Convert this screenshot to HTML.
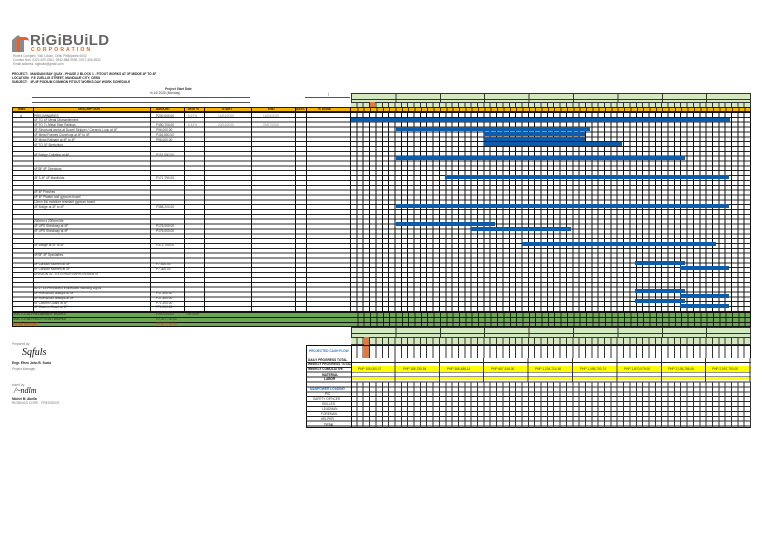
<!DOCTYPE html><html><head><style>
body{margin:0;width:768px;height:543px;background:#fff;position:relative;overflow:hidden;font-family:"Liberation Sans",sans-serif;}
.a{position:absolute;}
.t{position:absolute;font-size:3.2px;color:#333;white-space:nowrap;line-height:4px;}
.b{position:absolute;height:3.5px;background:#0b5cad;}
.vl{position:absolute;width:1px;background:#111;}
</style></head><body>
<div class="a" style="left:12px;top:35px;width:12px;height:17px;background:#8a8a8a;clip-path:polygon(0 30%,50% 0,100% 30%,100% 100%,0 100%)"></div>
<div class="a" style="left:17px;top:37px;width:12px;height:15px;border-left:3px solid #e8602c;border-top:3px solid #e8602c;border-radius:4px 4px 0 0;box-sizing:border-box"></div>
<div class="a" style="left:30px;top:32px;font-size:15px;color:#666;letter-spacing:0.3px;font-weight:bold">RiGiBUiLD</div>
<div class="a" style="left:31px;top:47px;font-size:5px;color:#e8602c;letter-spacing:2.2px;font-weight:bold">CORPORATION</div>
<div class="t" style="left:13px;top:54px;color:#777">Rivera Complex, Yati, Liloan, Cebu Philippines 6002</div>
<div class="t" style="left:13px;top:58px;color:#777">Contact Nos. 0322-929-0351, 0932-888-9936, 0917-306-9632</div>
<div class="t" style="left:13px;top:62px;color:#777">Email address: rigibuild@gmail.com</div>
<div class="t" style="left:12px;top:72px;font-weight:bold;color:#222">PROJECT:&nbsp;&nbsp;&nbsp;MANDANI BAY QUAY - PHASE 2 BLOCK 1 - FITOUT WORKS AT 3F MIDDE 4F TO 4F</div>
<div class="t" style="left:12px;top:76px;font-weight:bold;color:#222">LOCATION:&nbsp;&nbsp;F.E ZUELLIG STREET, MANDAUE CITY, CEBU</div>
<div class="t" style="left:12px;top:80px;font-weight:bold;color:#222">SUBJECT:&nbsp;&nbsp;&nbsp;4F-4F PODIUM COMMON FITOUT WORKS DAY WORK SCHEDULE</div>
<div class="t" style="left:165px;top:87px;font-weight:bold">Project Start Date</div>
<div class="t" style="left:150px;top:91px">in 14/ 2025 (Monday)</div>
<div class="a" style="left:32px;top:97px;width:218px;height:1px;background:#555"></div>
<div class="a" style="left:32px;top:102px;width:218px;height:1px;background:#555"></div>
<div class="a" style="left:305px;top:97px;width:45px;height:1px;background:#555"></div>
<div class="t" style="left:328px;top:92px">|</div>
<div class="a" style="left:351px;top:93px;width:400px;height:14px;background:#d4e8bf;border:1px solid #333;box-sizing:border-box;background-image:repeating-linear-gradient(90deg,transparent 0 43.4px,#333 43.4px 44.4px),linear-gradient(#333,#333);background-size:auto,100% 1px;background-position:0 0,0 4.5px;background-repeat:repeat,no-repeat"></div>
<div class="a" style="left:351px;top:102px;width:400px;height:5px;background:#d4e8bf;background-image:repeating-linear-gradient(90deg,transparent 0 5.35px,#333 5.35px 6.35px);border-top:1px solid #333;box-sizing:border-box"></div>
<div class="a" style="left:370px;top:102px;width:5px;height:5px;background:#e8763a"></div>
<div class="a" style="left:12px;top:107px;width:739px;height:5px;background:#f4b400;border:1px solid #222;box-sizing:border-box;background-image:repeating-linear-gradient(90deg,transparent 0 5.35px,#333 5.35px 6.35px);background-position:339px 0;background-size:400px 5px;background-repeat:no-repeat"></div>
<div class="t" style="left:18px;top:107px;font-weight:bold;color:#222">WBS</div>
<div class="t" style="left:78px;top:107px;font-weight:bold;color:#222">DESCRIPTION</div>
<div class="t" style="left:156px;top:107px;font-weight:bold;color:#222">AMOUNT</div>
<div class="t" style="left:188px;top:107px;font-weight:bold;color:#222">wt in %</div>
<div class="t" style="left:222px;top:107px;font-weight:bold;color:#222">START</div>
<div class="t" style="left:268px;top:107px;font-weight:bold;color:#222">END</div>
<div class="t" style="left:296px;top:107px;font-weight:bold;color:#222">DAYS</div>
<div class="t" style="left:318px;top:107px;font-weight:bold;color:#222">% DONE</div>
<div class="a" style="left:12px;top:112px;width:739px;height:200px;border:1px solid #111;box-sizing:border-box;background-image:repeating-linear-gradient(180deg,transparent 0 3.85px,#222 3.85px 4.85px)"></div>
<div class="a" style="left:351px;top:112px;width:400px;height:200px;background-image:repeating-linear-gradient(90deg,transparent 0 5.35px,#111 5.35px 6.35px)"></div>
<div class="vl" style="left:33px;top:107px;height:205px"></div>
<div class="vl" style="left:150px;top:107px;height:220px"></div>
<div class="vl" style="left:184px;top:107px;height:220px"></div>
<div class="vl" style="left:204px;top:107px;height:220px"></div>
<div class="vl" style="left:251px;top:107px;height:220px"></div>
<div class="vl" style="left:295px;top:107px;height:220px"></div>
<div class="vl" style="left:306px;top:107px;height:220px"></div>
<div class="vl" style="left:350px;top:107px;height:220px"></div>
<div class="t" style="left:20px;top:114px">A</div>
<div class="t" style="left:34px;top:114px;color:#222">PRELIMINARIES</div><div class="t" style="left:156px;top:114px">P200,000.00</div><div class="t" style="left:188px;top:114px;color:#888">8.57%</div><div class="t" style="left:218px;top:114px;color:#888">14/04/2025</div><div class="t" style="left:263px;top:114px;color:#888">14/06/2025</div>
<div class="t" style="left:34px;top:118px">4F TO 4F Metal Dismantlement</div>
<div class="t" style="left:34px;top:123px">4F TO 7L Metal Stair Railings</div><div class="t" style="left:156px;top:123px">P450,700.00</div><div class="t" style="left:188px;top:123px;color:#888">6.44%</div><div class="t" style="left:218px;top:123px;color:#888">20/04/2025</div><div class="t" style="left:263px;top:123px;color:#888">20/07/2025</div>
<div class="t" style="left:34px;top:128px">4F Structural works at Dowel Stripper / Ceramic Loop at 4F</div><div class="t" style="left:156px;top:128px">P96,000.00</div>
<div class="t" style="left:34px;top:133px">4F Metal Frames Coverings at 4F to 4F</div><div class="t" style="left:156px;top:133px">P116,800.00</div>
<div class="t" style="left:34px;top:138px">4F Metal Railgate at 4F to 4F</div><div class="t" style="left:156px;top:138px">P96,000.00</div>
<div class="t" style="left:34px;top:143px">4F TO 3F Stretching</div>
<div class="t" style="left:34px;top:153px">4F Bridge Collation at 4F</div><div class="t" style="left:156px;top:153px">P110,000.00</div>
<div class="t" style="left:34px;top:167px">4F/3F 4F Openings</div>
<div class="t" style="left:34px;top:176px">4F 3-4F 4F Manifolds</div><div class="t" style="left:156px;top:176px">P171,790.00</div>
<div class="t" style="left:34px;top:190px">4F 4F Finishes</div>
<div class="t" style="left:34px;top:195px">4F 4F Plaster and gypsum board</div>
<div class="t" style="left:34px;top:200px">12mm thk moisture resistant gypsum board</div>
<div class="t" style="left:34px;top:205px">4F Bridge at 4F to 4F</div><div class="t" style="left:156px;top:205px">P388,200.00</div>
<div class="t" style="left:34px;top:219px">200mm x 200mm tile</div>
<div class="t" style="left:34px;top:224px">4F UPS Shindway at 4F</div><div class="t" style="left:156px;top:224px">P176,000.00</div>
<div class="t" style="left:34px;top:229px">4F UPS Shindway at 4F</div><div class="t" style="left:156px;top:229px">P176,000.00</div>
<div class="t" style="left:34px;top:243px">4F Bridge at 4F to 4F</div><div class="t" style="left:156px;top:243px">P371,700.00</div>
<div class="t" style="left:34px;top:253px">4F/3F 4F Specialties</div>
<div class="t" style="left:34px;top:262px">4F Cartoon Moreen at 4F</div><div class="t" style="left:156px;top:262px">P7,300.00</div>
<div class="t" style="left:34px;top:267px">4F Cartoon Moreen at 4F</div><div class="t" style="left:156px;top:267px">P7,300.00</div>
<div class="t" style="left:34px;top:272px">DIVISION 32 - EXTERIOR IMPROVEMENTS</div>
<div class="t" style="left:34px;top:286px">32 17 23 Permanent Embedded Warning Lights</div>
<div class="t" style="left:34px;top:291px">4F Fibersmart Gallops at 4F</div><div class="t" style="left:156px;top:291px">P17,300.00</div>
<div class="t" style="left:34px;top:296px">4F Fibersmart Gallops at 4F</div><div class="t" style="left:156px;top:296px">P17,300.00</div>
<div class="t" style="left:34px;top:301px">4F Column Guard at 4F</div><div class="t" style="left:156px;top:301px">P71,300.00</div>
<div class="t" style="left:34px;top:305px">4F Column Guard at 4F</div><div class="t" style="left:156px;top:305px">P71,300.00</div>
<div class="b" style="left:351px;top:118px;width:379px"></div>
<div class="b" style="left:396px;top:127px;width:194px"></div>
<div class="b" style="left:484px;top:132px;width:101px"></div>
<div class="b" style="left:484px;top:137px;width:101px"></div>
<div class="b" style="left:484px;top:142px;width:138px"></div>
<div class="b" style="left:396px;top:156px;width:289px"></div>
<div class="b" style="left:445px;top:175px;width:284px"></div>
<div class="b" style="left:396px;top:204px;width:333px"></div>
<div class="b" style="left:396px;top:222px;width:99px"></div>
<div class="b" style="left:471px;top:227px;width:100px"></div>
<div class="b" style="left:522px;top:242px;width:194px"></div>
<div class="b" style="left:635px;top:261px;width:50px"></div>
<div class="b" style="left:680px;top:266px;width:49px"></div>
<div class="b" style="left:635px;top:289px;width:50px"></div>
<div class="b" style="left:680px;top:294px;width:49px"></div>
<div class="b" style="left:635px;top:299px;width:50px"></div>
<div class="b" style="left:680px;top:304px;width:49px"></div>
<div class="a" style="left:12px;top:312px;width:739px;height:15px;background:#6aa84f;border:1px solid #111;box-sizing:border-box;background-image:linear-gradient(#111,#111),linear-gradient(#111,#111),repeating-linear-gradient(90deg,transparent 0 5.35px,#222 5.35px 6.35px);background-size:100% 1px,100% 1px,400px 15px;background-position:0 4px,0 9px,339px 0;background-repeat:no-repeat"></div>
<div class="t" style="left:13px;top:312px;color:#222">SUB-TOTAL PRELIMINARY WORKS</div><div class="t" style="left:156px;top:312px">P200,000.00</div><div class="t" style="left:186px;top:312px">100.00%</div>
<div class="t" style="left:13px;top:317px;color:#222">SUB-TOTAL FIXED FITOUT WORKS</div><div class="t" style="left:156px;top:317px">P2,397,700.00</div>
<div class="t" style="left:13px;top:322px;color:#e03a00;font-weight:bold">TOTAL AMOUNT</div><div class="t" style="left:156px;top:322px;color:#e03a00">P2,597,700.00</div>
<div class="a" style="left:351px;top:327px;width:400px;height:31px;background:#d4e8bf;border:1px solid #333;box-sizing:border-box;background-image:repeating-linear-gradient(90deg,transparent 0 43.4px,#333 43.4px 44.4px),linear-gradient(#333,#333);background-size:auto,100% 1px;background-position:0 0,0 5px;background-repeat:repeat,no-repeat"></div>
<div class="a" style="left:351px;top:337px;width:400px;height:21px;background:#d4e8bf;background-image:repeating-linear-gradient(90deg,transparent 0 5.35px,#333 5.35px 6.35px),linear-gradient(#333,#333),linear-gradient(#333,#333);background-size:auto,100% 1px,100% 1px;background-position:0 0,0 0,0 7px;background-repeat:repeat,no-repeat,no-repeat"></div>
<div class="a" style="left:351px;top:345px;width:400px;height:13px;background:#fff;background-image:repeating-linear-gradient(90deg,transparent 0 5.35px,#333 5.35px 6.35px);border-top:1px solid #333;box-sizing:border-box"></div>
<div class="a" style="left:364px;top:337px;width:5px;height:21px;background:#e8763a"></div>
<div class="a" style="left:306px;top:345px;width:445px;height:83px;border:1px solid #111;box-sizing:border-box"></div>
<div class="t" style="left:309px;top:349px;color:#2a7bd4;font-weight:bold">PROJECTED CASH FLOW</div>
<div class="a" style="left:306px;top:358px;width:445px;height:70px;background-image:repeating-linear-gradient(180deg,transparent 0 3.9px,#222 3.9px 4.9px)"></div>
<div class="a" style="left:351px;top:358px;width:400px;height:24px;background:#fff;background-image:repeating-linear-gradient(90deg,transparent 0 43.4px,#333 43.4px 44.4px),repeating-linear-gradient(180deg,transparent 0 3.9px,#222 3.9px 4.9px)"></div>
<div class="a" style="left:351px;top:366px;width:400px;height:6px;background:#ffff00;background-image:repeating-linear-gradient(90deg,transparent 0 43.4px,#333 43.4px 44.4px)"></div>
<div class="a" style="left:351px;top:377px;width:400px;height:3px;background:#ffff00;background-image:repeating-linear-gradient(90deg,transparent 0 43.4px,#333 43.4px 44.4px)"></div>
<div class="a" style="left:351px;top:382px;width:400px;height:46px;background-image:repeating-linear-gradient(90deg,transparent 0 5.35px,#333 5.35px 6.35px)"></div>
<div class="vl" style="left:351px;top:345px;height:83px"></div>
<div class="t" style="left:308px;top:358px;font-weight:bold;color:#222">DAILY PROGRESS TOTAL</div>
<div class="t" style="left:308px;top:362px;font-weight:bold;color:#222">WEEKLY PROGRESS TOTAL</div>
<div class="t" style="left:308px;top:367px;font-weight:bold;color:#222">WEEKLY CUMULATIVE</div>
<div class="t" style="left:322px;top:373px;font-weight:bold;color:#222">MATERIAL</div>
<div class="t" style="left:324px;top:377px;font-weight:bold;color:#222">LABOR</div>
<div class="t" style="left:310px;top:387px;color:#2a7bd4;font-weight:bold">MANPOWER LOADING</div>
<div class="t" style="left:325px;top:392px">PIC</div>
<div class="t" style="left:313px;top:397px">SAFETY OFFICER</div>
<div class="t" style="left:322px;top:402px">SKILLED</div>
<div class="t" style="left:322px;top:407px">LEADMAN</div>
<div class="t" style="left:321px;top:412px">FOREMAN</div>
<div class="t" style="left:321px;top:417px">HELPER</div>
<div class="t" style="left:324px;top:423px;font-weight:bold">TOTAL</div>
<div class="t" style="left:358px;top:367px">PHP 105,000.07</div><div class="t" style="left:403px;top:367px">PHP 185,750.54</div><div class="t" style="left:447px;top:367px">PHP 366,486.14</div><div class="t" style="left:491px;top:367px">PHP 667,516.00</div><div class="t" style="left:535px;top:367px">PHP 1,204,714.46</div><div class="t" style="left:580px;top:367px">PHP 1,456,700.74</div><div class="t" style="left:624px;top:367px">PHP 1,870,079.00</div><div class="t" style="left:668px;top:367px">PHP 2,106,786.06</div><div class="t" style="left:712px;top:367px">PHP 2,597,700.00</div>
<div class="t" style="left:12px;top:342px;color:#777">Prepared by:</div>
<div class="a" style="left:22px;top:347px;font-size:10px;font-style:italic;font-family:'Liberation Serif',serif;color:#111">Sqfuls</div>
<div class="t" style="left:12px;top:361px;font-weight:bold;color:#222">Engr. Efren John B. Suela</div>
<div class="t" style="left:12px;top:367px;color:#777">Project Manager</div>
<div class="t" style="left:12px;top:383px;color:#777">noted by:</div>
<div class="a" style="left:14px;top:386px;font-size:8px;font-style:italic;font-family:'Liberation Serif',serif;color:#111">/~ndlm</div>
<div class="t" style="left:12px;top:397px;font-weight:bold;color:#222">Michel M. Abella</div>
<div class="t" style="left:12px;top:401px;color:#777">RIGIBUILD CORP. - PRESIDENT</div>
</body></html>
